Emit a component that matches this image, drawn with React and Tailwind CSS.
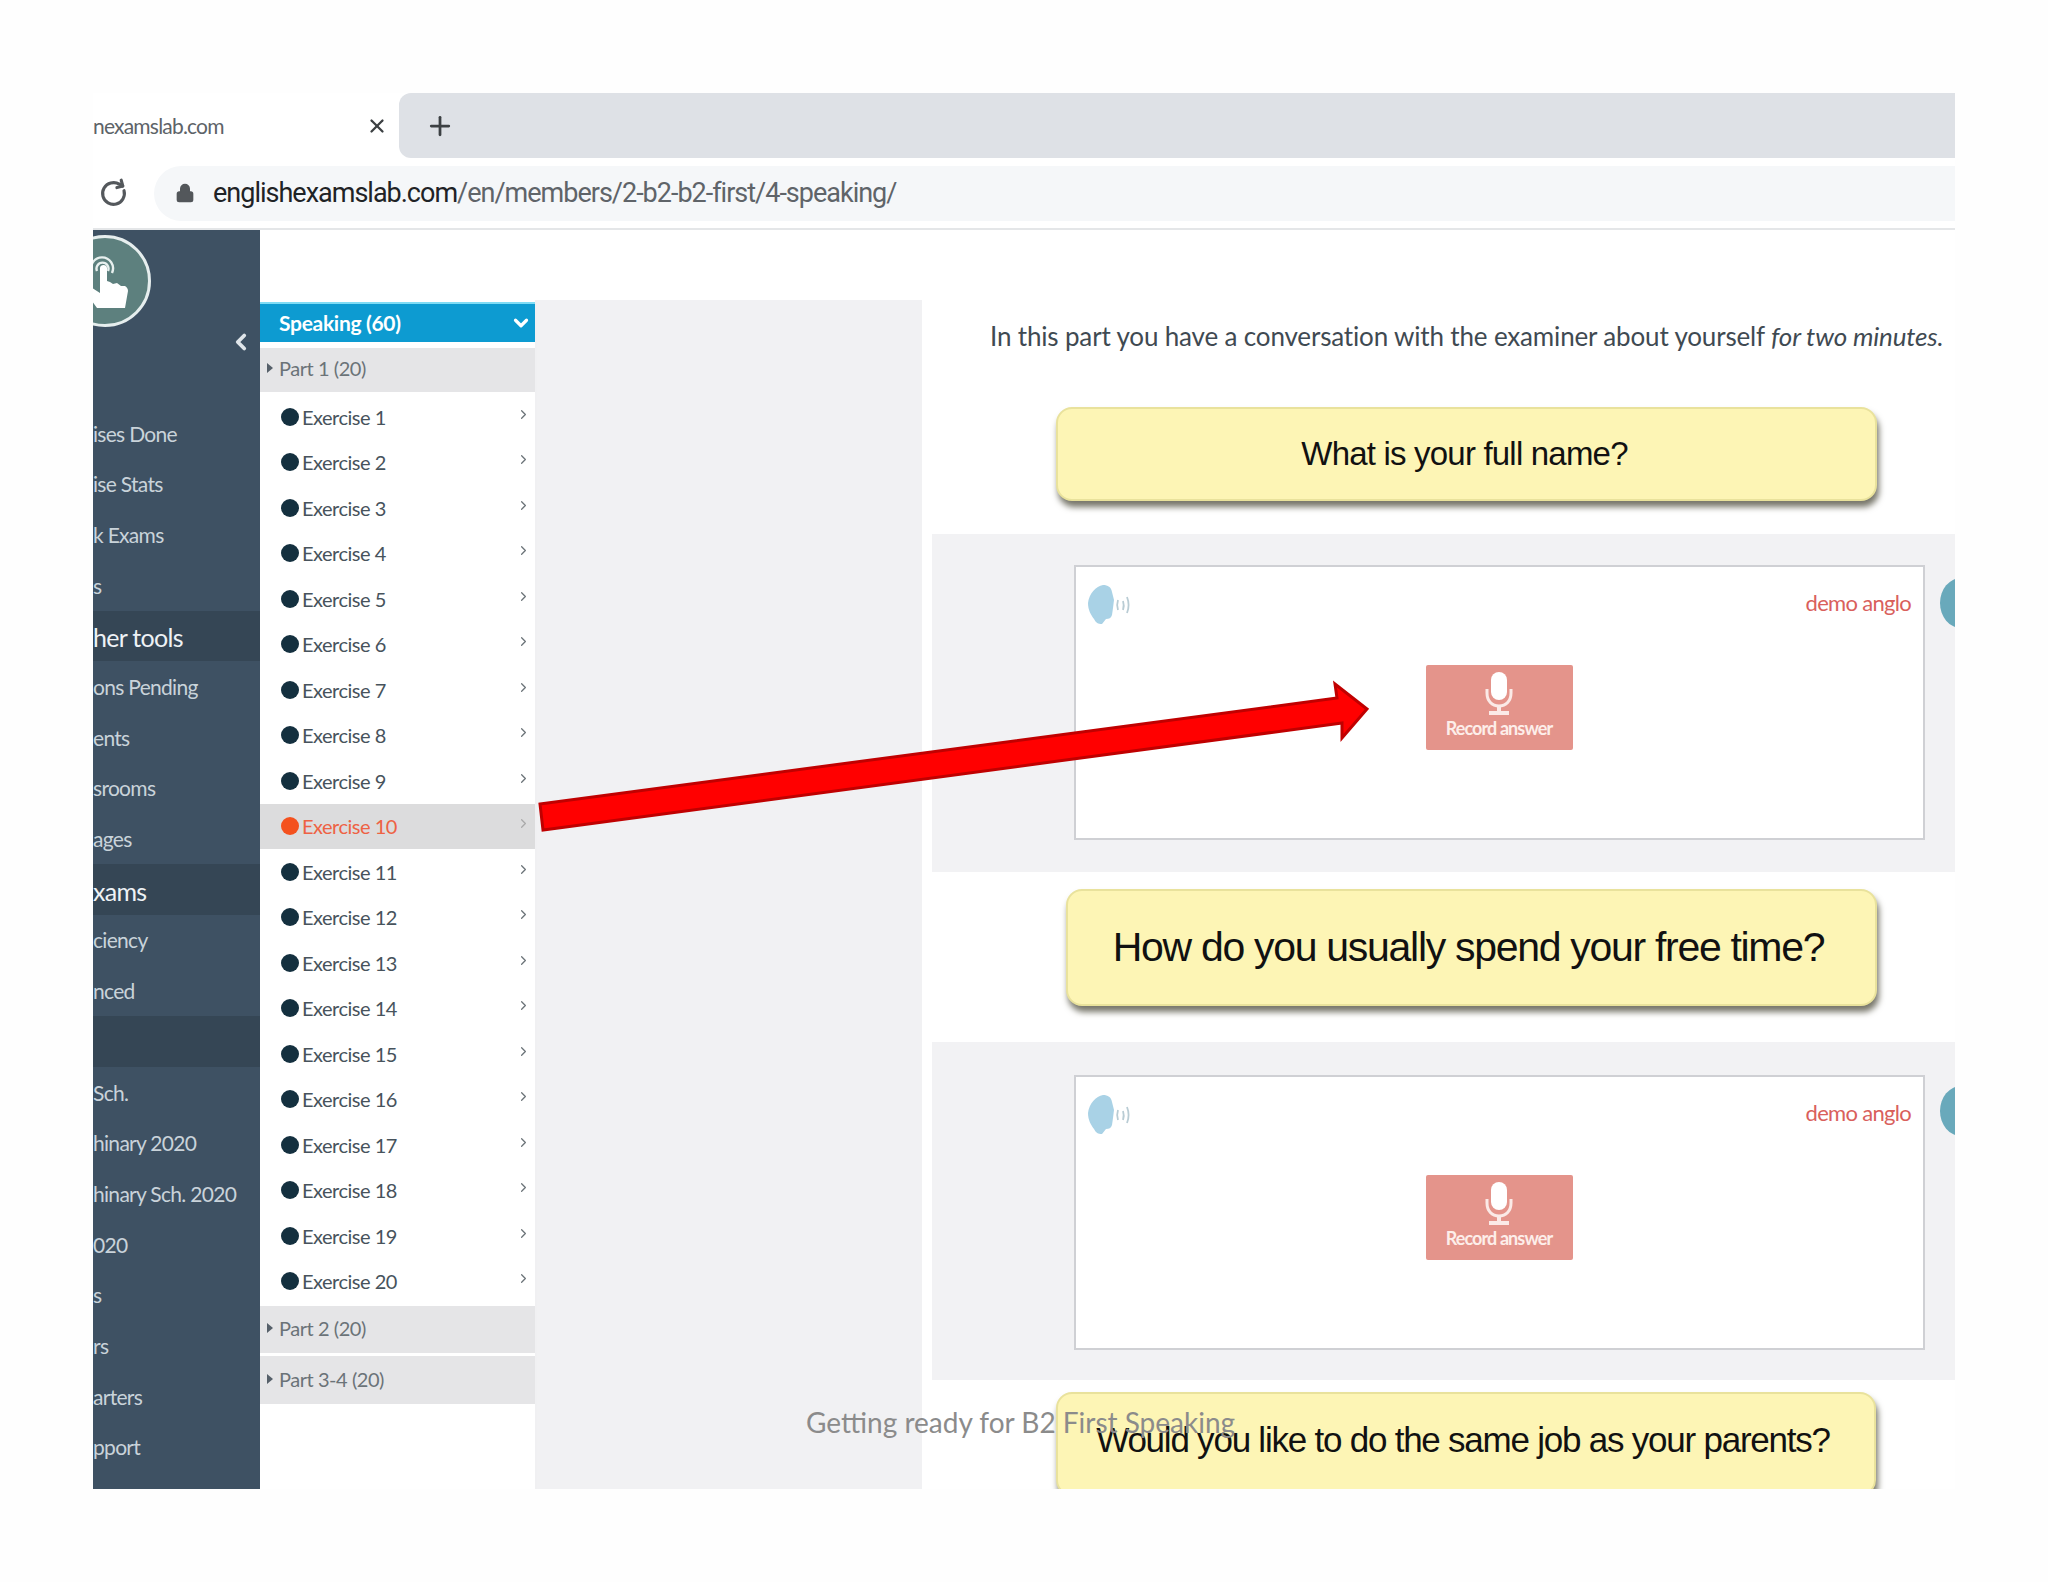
import React from 'react';
import { ChevronDown, ChevronLeft, ChevronRight, Lock, Plus, RotateCw, X } from 'lucide-react';

const sideItems = [
    { text: 'ises Done' },
    { text: 'ise Stats' },
    { text: 'k Exams' },
    { text: 's' },
    { text: 'her tools', head: true },
    { text: 'ons Pending' },
    { text: 'ents' },
    { text: 'srooms' },
    { text: 'ages' },
    { text: 'xams', head: true },
    { text: 'ciency' },
    { text: 'nced' },
    { text: '', head: true },
    { text: 'Sch.' },
    { text: 'hinary 2020' },
    { text: 'hinary Sch. 2020' },
    { text: '020' },
    { text: 's' },
    { text: 'rs' },
    { text: 'arters' },
    { text: 'pport' },
];

const exercises = Array.from({ length: 20 }, (_, i) => i + 1);

function PartRow({ label, className }) {
    return (
        <div className={`flex items-center bg-[#e5e5e7] text-[#6b7378] text-[20px] tracking-[-0.45px] ${className}`}>
            <span className="ml-[7px] mr-[6px] w-0 h-0 border-y-[5px] border-y-transparent border-l-[6px] border-l-[#56606a]" />
            {label}
        </div>
    );
}

function ExerciseRow({ n }) {
    const active = n === 10;
    return (
        <div className={`h-[45.5px] flex items-center pl-[21px] pr-[4px] ${active ? 'bg-[#dcdcdd]' : ''}`}>
            <span className={`w-[18px] h-[18px] rounded-full shrink-0 ${active ? 'bg-[#f4511e]' : 'bg-[#14303f]'}`} />
            <span className={`ml-[3px] text-[20px] tracking-[-0.5px] ${active ? 'text-[#ee6244]' : 'text-[#47535c]'}`}>
                Exercise {n}
            </span>
            <ChevronRight className={`ml-auto mb-[5px] ${active ? 'text-[#a9a9a9]' : 'text-[#6b7378]'}`} size={15} />
        </div>
    );
}

function QuestionCard({ children, className }) {
    return (
        <div className={`shrink-0 flex items-center justify-center rounded-[16px] bg-[#fdf5b5] border-2 border-[#e9e29c] shadow-[2px_6px_6px_#77766a] text-[#111] font-['Liberation_Sans',sans-serif] ${className}`}>
            {children}
        </div>
    );
}

function SpeakerIcon() {
    return (
        <svg className="mt-[2px]" width="44" height="40" viewBox="0 0 44 40">
            <path d="M15 0c5 0 8 2 9 7l2 8-1 8-1 7c-1 3-3 4-6 4l-4 5c-4 0-6-1-8-5C3 30 0 25 0 18 1 9 8 1 15 0z" fill="#a9d2e6" />
            <path d="M30 15c-1 3-1 7 0 10M35 16c1 3 1 6 0 9M39 12c2 5 2 11 0 16" fill="none" stroke="#b9ccd4" strokeWidth="1.8" />
        </svg>
    );
}

function MicIcon() {
    return (
        <svg width="30" height="44" viewBox="0 0 30 44">
            <rect x="7" y="0" width="16" height="28" rx="8" fill="#fff" />
            <path d="M3 17v4c0 8 5 13 12 13s12-5 12-13v-4" fill="none" stroke="#fbeae7" strokeWidth="3" />
            <rect x="13" y="34" width="4" height="6" fill="#fbeae7" />
            <rect x="5" y="39" width="20" height="4" fill="#fbeae7" />
        </svg>
    );
}

function AnswerBlock({ className }) {
    return (
        <div className={`relative shrink-0 overflow-hidden ml-[10px] h-[338px] pl-[142px] pr-[30px] bg-[#f2f2f4] ${className}`}>
            <div className="h-[275px] flex flex-col bg-white border-2 border-[#cfd0d4] px-[12px] pt-[16px]">
                <div className="flex items-start justify-between h-[44px]">
                    <SpeakerIcon />
                    <span className="mt-[3px] text-[22px] tracking-[-0.7px] text-[#d9605c]">demo anglo</span>
                </div>
                <div className="mt-[38px] self-center ml-[-1px] w-[147px] h-[85px] flex flex-col items-center pt-[7px] rounded-[2px] bg-[#e4948b]">
                    <MicIcon />
                    <span className="mt-[3px] text-[18px] leading-[18px] font-bold tracking-[-0.9px] text-[#fdeeea]">Record answer</span>
                </div>
            </div>
            <span className="absolute right-[-27px] top-[44px] w-[42px] h-[50px] rounded-[50%] bg-[#69a9bb]" />
        </div>
    );
}

function Arrow() {
    return (
        <svg className="absolute left-0 top-0 pointer-events-none" width="1862" height="1396" viewBox="93 93 1862 1396">
            <path
                d="M540 804 L1337 698 L1335 684 L1367 709 L1342 738 L1342 723 L543 830 Z"
                fill="#ff0000"
                stroke="#c00000"
                strokeWidth="3"
            />
        </svg>
    );
}

export default function App() {
    return (
        <div className="w-[2048px] h-[1582px] pt-[93px] pl-[93px] bg-[#fefefe] font-['Lato',sans-serif]">
            <div className="relative w-[1862px] h-[1396px] overflow-hidden bg-white">

                {/* Abas do navegador */}
                <div className="h-[65px] flex">
                    <div className="w-[306px] shrink-0 flex items-center bg-white">
                        <span className="text-[21px] tracking-[-0.8px] text-[#5d6368]">nexamslab.com</span>
                        <X className="ml-auto mr-[11px] text-[#3c4043]" size={22} strokeWidth={2.5} />
                    </div>
                    <div className="flex-1 flex items-center pl-[26px] rounded-tl-[12px] rounded-bl-[12px] bg-[#dee1e6]">
                        <Plus className="text-[#3c4043]" size={30} strokeWidth={2.2} />
                    </div>
                </div>

                {/* Barra de endereco */}
                <div className="h-[72px] flex items-center bg-white border-b-2 border-[#e4e6e8]">
                    <RotateCw className="ml-[6px] text-[#54585c] rotate-[-15deg]" size={29} strokeWidth={2.6} />
                    <div className="ml-[26px] flex-1 h-[55px] flex items-center rounded-l-full bg-[#f5f7f9]">
                        <Lock className="ml-[21px] text-[#53575b]" size={20} fill="#53575b" />
                        <span className="ml-[18px] font-['Roboto',sans-serif] text-[27px] tracking-[-1px] text-[#1f2326]">
                            englishexamslab.com<span className="text-[#5f6469]">/en/members/2-b2-b2-first/4-speaking/</span>
                        </span>
                    </div>
                </div>

                <div className="flex h-[1259px]">
                    {/* Menu lateral */}
                    <div className="w-[167px] shrink-0 overflow-hidden flex flex-col bg-[#3e5163]">
                        <div className="h-[178px] shrink-0 relative">
                            <div className="-ml-[34px] mt-[5px] w-[92px] h-[92px] flex items-center justify-center rounded-full bg-[#5d807e] border-[3px] border-[#e6eeee]">
                                <svg width="84" height="84" viewBox="0 0 84 84">
                                    <path d="M29 34a11 11 0 1 1 20 0M34 32a6 6 0 1 1 11 0" fill="none" stroke="#e8f0ef" strokeWidth="2.4" />
                                    <path d="M37 29c0-4 7-4 7 0v13l3 1 3 2 4-1 4 3 4 0c2 1 3 3 3 5l-3 17H34l-13-18c-2-4 2-6 5-4l11 7z" fill="#fff" />
                                </svg>
                            </div>
                            <ChevronLeft className="absolute right-[6px] top-[99px] text-[#dfe5ea]" size={26} strokeWidth={3.5} />
                        </div>
                        {sideItems.map((item, i) => (
                            <div
                                key={i}
                                className={`h-[50.7px] shrink-0 flex items-center tracking-[-0.7px] ${item.head ? 'bg-[#354655] pt-[4px] text-[25px] text-[#eef2f5]' : 'text-[21px] text-[#c9d3da]'}`}
                            >
                                {item.text}
                            </div>
                        ))}
                    </div>

                    {/* Lista de exercicios */}
                    <div className="w-[275px] shrink-0 pt-[72px]">
                        <div className="h-[40px] flex items-center pl-[19px] pr-[3px] bg-[#0d9bd1] border-t-2 border-[#7fdcf5] text-white text-[21px] font-bold tracking-[-0.3px]">
                            Speaking (60)
                            <ChevronDown className="ml-auto" size={22} strokeWidth={3.5} />
                        </div>
                        <PartRow label="Part 1 (20)" className="h-[44px] mt-[6px] pb-[4px]" />
                        <div className="mt-[2px]">
                            {exercises.map((n) => <ExerciseRow key={n} n={n} />)}
                        </div>
                        <PartRow label="Part 2 (20)" className="h-[47px] mt-[2px] pb-[3px]" />
                        <PartRow label="Part 3-4 (20)" className="h-[48px] mt-[3px] pb-[2px]" />
                    </div>

                    <div className="w-[387px] shrink-0 mt-[70px] border-l-2 border-[#f0f0f2] bg-[#f1f1f3]" />

                    {/* Conteudo */}
                    <div className="flex-1 min-w-0 flex flex-col">
                        <p className="shrink-0 mt-[85px] h-[42px] flex items-center pl-[68px] whitespace-nowrap text-[26px] tracking-[-0.16px] text-[#3f4a52]">
                            In this part you have a conversation with the examiner about yourself&nbsp;<em>for two minutes.</em>
                        </p>
                        <QuestionCard className="mt-[50px] ml-[134px] w-[821px] h-[94px] pr-[4px] text-[33px] tracking-[-0.8px]">
                            What is your full name?
                        </QuestionCard>
                        <AnswerBlock className="mt-[33px] pt-[31px]" />
                        <QuestionCard className="mt-[17px] ml-[144px] w-[811px] h-[117px] pr-[6px] text-[41px] tracking-[-1.3px]">
                            How do you usually spend your free time?
                        </QuestionCard>
                        <AnswerBlock className="mt-[36px] pt-[33px]" />
                        <QuestionCard className="mt-[12px] ml-[134px] w-[820px] h-[104px] pb-[8px] pr-[6px] text-[35px] tracking-[-1.23px]">
                            Would you like to do the same job as your parents?
                        </QuestionCard>
                    </div>
                </div>

                <Arrow />

                {/* Rodape do slide */}
                <span className="absolute left-[713px] top-[1311px] text-[28px] leading-[36px] text-[#8b8b8b] whitespace-nowrap">
                    Getting ready for B2 First Speaking
                </span>
            </div>
        </div>
    );
}
